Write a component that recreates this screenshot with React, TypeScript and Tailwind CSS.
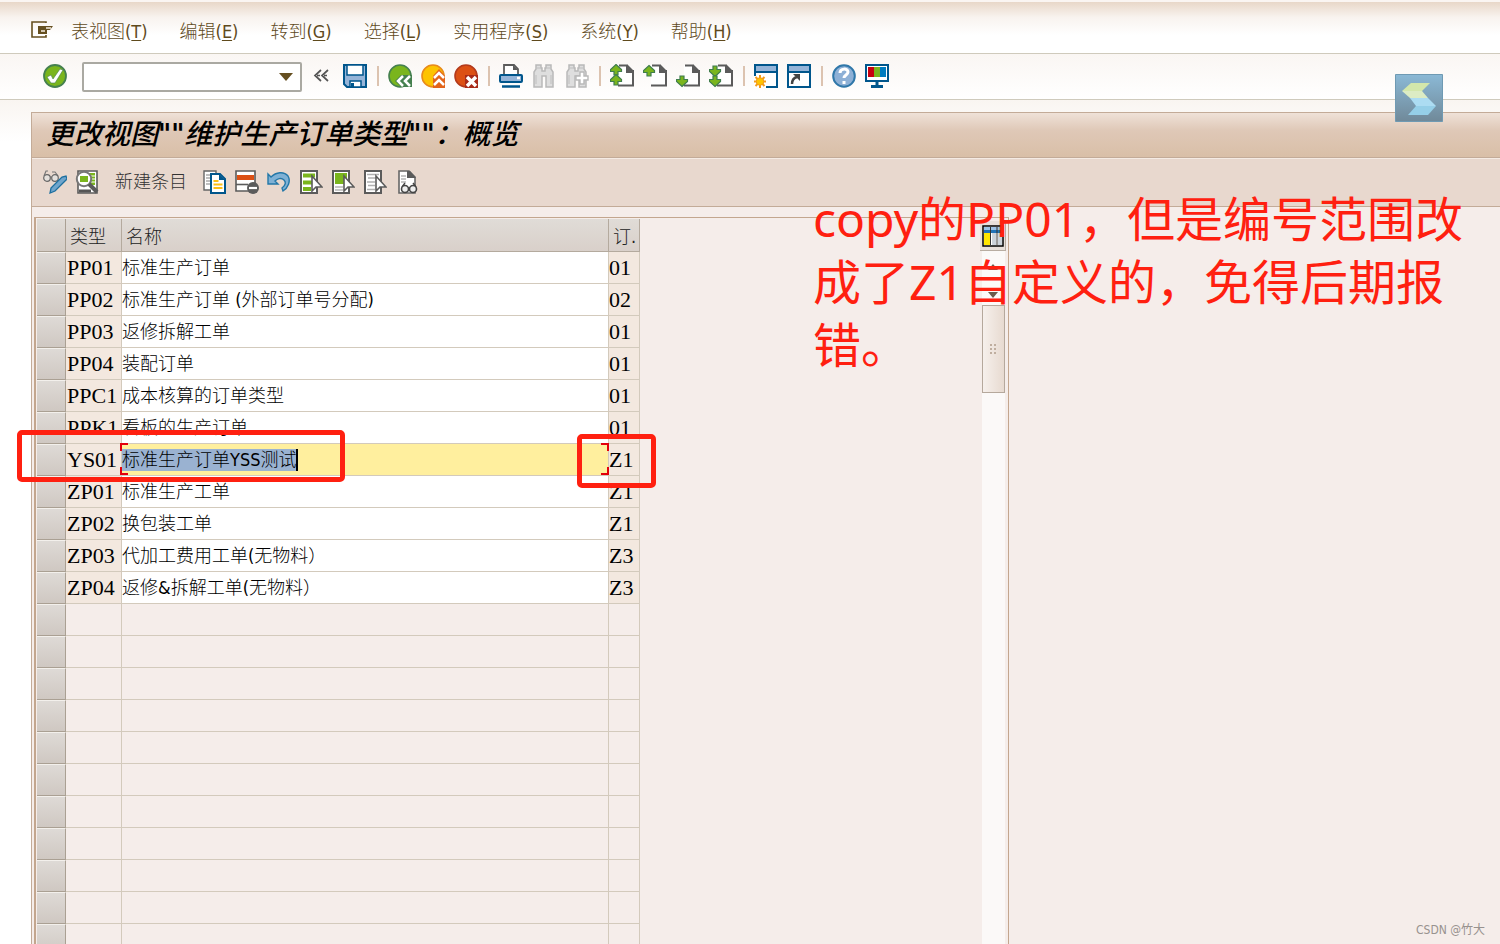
import React from 'react';

interface OrderType {
  code: string;
  name: string;
  range: string;
}

const MENUS = [
  { label: '表视图', hotkey: 'T' },
  { label: '编辑', hotkey: 'E' },
  { label: '转到', hotkey: 'G' },
  { label: '选择', hotkey: 'L' },
  { label: '实用程序', hotkey: 'S' },
  { label: '系统', hotkey: 'Y' },
  { label: '帮助', hotkey: 'H' },
];

const ORDER_TYPES: OrderType[] = [
  { code: 'PP01', name: '标准生产订单', range: '01' },
  { code: 'PP02', name: '标准生产订单 (外部订单号分配)', range: '02' },
  { code: 'PP03', name: '返修拆解工单', range: '01' },
  { code: 'PP04', name: '装配订单', range: '01' },
  { code: 'PPC1', name: '成本核算的订单类型', range: '01' },
  { code: 'PPK1', name: '看板的生产订单', range: '01' },
  { code: 'YS01', name: '标准生产订单YSS测试', range: 'Z1' },
  { code: 'ZP01', name: '标准生产工单', range: 'Z1' },
  { code: 'ZP02', name: '换包装工单', range: 'Z1' },
  { code: 'ZP03', name: '代加工费用工单(无物料）', range: 'Z3' },
  { code: 'ZP04', name: '返修&拆解工单(无物料）', range: 'Z3' },
];

const ACTIVE_CODE = 'YS01';
const EMPTY_ROWS = Array.from({ length: 11 }, (_, i) => i);

const Icon: React.FC<{ children: React.ReactNode }> = ({ children }) => (
  <svg className="w-6 h-6 block" viewBox="0 0 24 24" fill="none">{children}</svg>
);

const ToolButton: React.FC<{ label: string; disabled?: boolean; children: React.ReactNode }> = ({ label, disabled, children }) => (
  <button type="button" aria-label={label} disabled={disabled} className="w-6 h-6 shrink-0">
    <Icon>{children}</Icon>
  </button>
);

const Separator = () => (
  <div className="w-[3px] h-5 shrink-0 flex justify-center"><div className="w-0.5 bg-[#dcc3b0]" /></div>
);

/* Page outline shared by the four paging buttons */
const PageShape = () => (
  <>
    <path d="M8 1h10l5 5v16H8z" fill="#fff" />
    <path d="M9 1.5h9M23 6v15.500H8" stroke="#5b5b5b" strokeWidth="2" />
    <path d="M16 1h2l6 6v2h-8z" fill="#5b5b5b" />
  </>
);

const ArrowUp = ({ y }: { y: number }) => (
  <path transform={`translate(0 ${y})`} d="M6 0.5L11.500 5.5V7.5H8V11H4V7.5H0.500V5.5z" fill="#7ab51d" stroke="#3f7d4e" strokeWidth="1.2" />
);

const ArrowDown = ({ y }: { y: number }) => (
  <path transform={`translate(0 ${y})`} d="M6 10.5L11.500 5.5V3.5H8V0H4V3.5H0.500V5.5z" fill="#7ab51d" stroke="#3f7d4e" strokeWidth="1.2" />
);

const Binoculars = () => (
  <>
    <path d="M4 1h5v3h1v3h3V4h1V1h5v4l2 3v15h-7V12h-4v11H2V8l2-3z" fill="#dedede" stroke="#b9b9b9" strokeWidth="1.5" />
    <path d="M5 4h3M15 4h3M4 11v9M19 11v9" stroke="#c9c9c9" strokeWidth="1.5" />
  </>
);

const WindowShape = () => (
  <>
    <path d="M1 1h22v22H1z" fill="#fff" stroke="#00568c" strokeWidth="2" />
    <path d="M2 2h20v5H2z" fill="#95b4d8" />
    <path d="M1 8h22" stroke="#00568c" strokeWidth="2" />
  </>
);

const Cursor = () => (
  <path d="M13 6v15l4-4h6z" fill="#fff" stroke="#5b5b5b" strokeWidth="1.6" />
);

const MenuBar = () => (
  <nav className="h-[54px] shrink-0 border-t-2 border-t-[#faf5f2] border-b border-b-[#cfcabc] bg-linear-to-b from-[#e8d7c8] via-[#f8f3ef] via-30% to-white to-65% flex items-center pl-[30px] pt-2 text-lg leading-6 text-[#5f4a1c]">
    <button type="button" aria-label="系统菜单" className="mr-[17px] w-6 h-5 mb-1">
      <svg className="w-6 h-5" viewBox="0 0 24 20" fill="none">
        <path d="M16 3V2H2v15h14v-2" stroke="#654f20" strokeWidth="1.6" />
        <path d="M8 6h15l-3 4h-3v4H8z" fill="#654f20" />
        <path d="M16 8h5M11 11h4" stroke="#f7efe4" strokeWidth="1.5" />
      </svg>
    </button>
    <div className="flex gap-8">
      {MENUS.map((m) => (
        <button type="button" key={m.hotkey} className="whitespace-nowrap">
          {m.label}(<span className="underline underline-offset-2">{m.hotkey}</span>)
        </button>
      ))}
    </div>
  </nav>
);

const StandardToolbar = () => (
  <div className="h-[46px] shrink-0 border-b border-[#cfcabc] bg-linear-to-b from-[#faf6f3] to-white flex items-center gap-[9px] pl-[43px] pb-0.5">
    <ToolButton label="回车">
      <circle cx="12" cy="12" r="11" fill="#7ab51d" stroke="#45804f" strokeWidth="1.8" />
      <path d="M4 13l4-2 2 4 7-10 3 1-8 13h-4z" fill="#fff" stroke="#45804f" strokeWidth="0.6" />
    </ToolButton>
    <div className="relative ml-1.5 mt-0.5 w-[220px] shrink-0">
      <input type="text" aria-label="命令" className="w-full h-[30px] rounded-xs border-2 border-[#aaa9a2] bg-white pl-2 pr-8 outline-none" />
      <svg className="absolute right-2 top-2.5 w-4 h-2.5" viewBox="0 0 16 10"><path d="M1 1h14L8 9z" fill="#654f20" /></svg>
    </div>
    <button type="button" aria-label="收起" className="w-[23px] h-6 shrink-0">
      <svg className="w-[23px] h-6" viewBox="0 0 23 24" fill="none">
        <path d="M10 6l-6 5.5L10 17M17 6l-6 5.5L17 17M6 11.5h3M13 11.5h3" stroke="#555" strokeWidth="1.7" />
      </svg>
    </button>
    <ToolButton label="保存">
      <path d="M1 1h22v22H4l-3-3z" fill="#95b4d8" stroke="#00568c" strokeWidth="2" />
      <path d="M4 1h16v10H4z" fill="#fff" stroke="#00568c" strokeWidth="1.5" />
      <path d="M7 17h11v6H7z" fill="#fff" stroke="#00568c" strokeWidth="1.5" />
      <path d="M8 19h3v4H8z" fill="#00568c" />
    </ToolButton>
    <Separator />
    <ToolButton label="返回">
      <circle cx="12" cy="12" r="11" fill="#7ab51d" stroke="#45804f" strokeWidth="1.6" />
      <path d="M13 11l-6 6 6 6h11V11z" fill="#45804f" />
      <path d="M15 12l-5 5 5 5M22 12l-5 5 5 5" stroke="#fff" strokeWidth="2.5" />
    </ToolButton>
    <ToolButton label="退出">
      <circle cx="12" cy="12" r="11" fill="#fdc300" stroke="#e88a1a" strokeWidth="1.6" />
      <path d="M12 12l6-7 6 7v12H12z" fill="#e2641a" />
      <path d="M13 14l5-5 5 5M13 21l5-5 5 5" stroke="#fff" strokeWidth="2.5" />
    </ToolButton>
    <ToolButton label="取消">
      <circle cx="12" cy="12" r="11" fill="#dc5014" stroke="#b33a1c" strokeWidth="1.6" />
      <path d="M11 11h13v13H11z" fill="#a82a18" />
      <path d="M13 13l9 9M22 13l-9 9" stroke="#fff" strokeWidth="3.5" />
    </ToolButton>
    <Separator />
    <ToolButton label="打印">
      <path d="M5 10V1h10l4 4v5" fill="#fff" stroke="#5b5b5b" strokeWidth="1.8" />
      <path d="M14 1l5 5h-5z" fill="#5b5b5b" />
      <rect x="1" y="11" width="22" height="7" rx="1" fill="#95b4d8" stroke="#00568c" strokeWidth="2" />
      <path d="M18 14h3" stroke="#fff" strokeWidth="2.5" />
      <path d="M3 22.5h18" stroke="#00568c" strokeWidth="2.5" />
    </ToolButton>
    <ToolButton label="查找" disabled><Binoculars /></ToolButton>
    <ToolButton label="继续查找" disabled>
      <Binoculars />
      <path d="M15 8h4v4h4v4h-4v4h-4v-4h-4v-4h4z" fill="#fff" stroke="#b9b9b9" strokeWidth="1.4" />
    </ToolButton>
    <Separator />
    <ToolButton label="第一页"><PageShape /><ArrowUp y={0} /><ArrowUp y={10} /></ToolButton>
    <ToolButton label="上一页"><PageShape /><ArrowUp y={1} /></ToolButton>
    <ToolButton label="下一页"><PageShape /><ArrowDown y={12} /></ToolButton>
    <ToolButton label="最后一页"><PageShape /><ArrowDown y={2} /><ArrowDown y={12} /></ToolButton>
    <Separator />
    <ToolButton label="创建会话">
      <WindowShape />
      <path d="M0 12h12v12H0z" fill="#fff" />
      <path d="M6 11v13M0 17.5h12M1.5 13l9 9M10.5 13l-9 9" stroke="#f39a1a" strokeWidth="2" />
      <circle cx="6" cy="17.5" r="3.8" fill="#fdc300" stroke="#f39a1a" />
    </ToolButton>
    <ToolButton label="创建快捷方式">
      <WindowShape />
      <path d="M5 20c0-4 1-6 5-7" stroke="#444" strokeWidth="2.5" />
      <path d="M6 10h7v7z" fill="#444" />
    </ToolButton>
    <Separator />
    <ToolButton label="帮助">
      <circle cx="12" cy="12" r="10.8" fill="#8db0d6" stroke="#2f77a9" strokeWidth="2" />
      <path d="M8 9c0-5 8-5 8-1 0 3-4 3-4 6M12 17v3" stroke="#fff" strokeWidth="3" />
    </ToolButton>
    <ToolButton label="定制本地布局">
      <path d="M1 1h22v16H1z" fill="#fff" stroke="#00568c" strokeWidth="2" />
      <path d="M3 3h6v10H3z" fill="#c8000f" />
      <path d="M9 3h6v10H9z" fill="#7ab51d" />
      <path d="M15 3h6v10h-6z" fill="#007cc0" />
      <path d="M12 17v5M6 22.5h12" stroke="#00568c" strokeWidth="3" />
    </ToolButton>
  </div>
);

const ViewToolbar = () => (
  <div className="h-12 shrink-0 bg-[#e8d8ce] border-t border-t-[#f5ebe4] flex items-center gap-2 pl-[11px] pr-2 pb-px">
    <ToolButton label="显示/更改">
      <path d="M1 6l2-5h2M9 2h3l3 4M7 7h2" stroke="#777" strokeWidth="1.2" />
      <circle cx="4" cy="8" r="3.3" fill="#e4e0dc" stroke="#666" strokeWidth="1.2" />
      <circle cx="12" cy="8" r="3.3" fill="#e4e0dc" stroke="#666" strokeWidth="1.2" />
      <path d="M8 18L19 7l4-1 1 3-12 12-5 2z" fill="#6fa5cc" stroke="#1d6f9f" strokeWidth="1.3" />
    </ToolButton>
    <ToolButton label="选择集">
      <path d="M3 1h19v22H3z" fill="#fff" stroke="#5b5b5b" strokeWidth="1.6" />
      <path d="M14 3h6v12h-6z" fill="#7ab51d" />
      <path d="M14 6h6M14 9h6M14 12h6" stroke="#fff" />
      <path d="M4 21h12" stroke="#555" strokeWidth="3" />
      <circle cx="9" cy="9" r="7.2" fill="#fff" stroke="#777" strokeWidth="2" />
      <path d="M5 6h8v6H5z" fill="#7ab51d" />
      <path d="M14 14l8 8" stroke="#5b5b5b" strokeWidth="4" />
    </ToolButton>
    <button type="button" className="mx-2 text-lg leading-6 text-[#333] whitespace-nowrap">新建条目</button>
    <ToolButton label="复制为">
      <path d="M1 1h12v19H1z" fill="#fff" stroke="#666" strokeWidth="1.4" />
      <path d="M3 5h4M3 8h4M3 11h4M3 14h4" stroke="#aaa" strokeWidth="1.3" />
      <path d="M8 4h9l5 5v14H8z" fill="#fff" stroke="#00568c" strokeWidth="2" />
      <path d="M16 4l6 6h-6z" fill="#00568c" />
      <path d="M10.500 11h5M10.500 14.500h9M10.500 18h9" stroke="#fdbf14" strokeWidth="1.8" />
    </ToolButton>
    <ToolButton label="删除">
      <path d="M1 1h19v20H1z" fill="#fff" stroke="#5b5b5b" strokeWidth="1.6" />
      <path d="M2 5h17v5H2z" fill="#dc5014" />
      <path d="M1 14.500h12" stroke="#5b5b5b" strokeWidth="1.6" />
      <circle cx="18" cy="18" r="6" fill="#5b5b5b" />
      <path d="M14 18h8" stroke="#fff" strokeWidth="2.2" />
    </ToolButton>
    <ToolButton label="撤消更改">
      <path d="M1 4l3 3c5-5 13-6 17-1 3 5 0 12-5 15l-1-3c4-3 4-6 2-8-3-3-7-1-9 1l3 3H1z" fill="#7fb1d5" stroke="#2377a8" strokeWidth="1.4" />
    </ToolButton>
    <ToolButton label="全选">
      <path d="M2 1h16v22H2z" fill="#fff" stroke="#5b5b5b" strokeWidth="2" />
      <path d="M4 5.500h12M4 12.500h9M4 19h8" stroke="#7ab51d" strokeWidth="4" />
      <Cursor />
    </ToolButton>
    <ToolButton label="选择块">
      <path d="M2 1h16v22H2z" fill="#fff" stroke="#5b5b5b" strokeWidth="2" />
      <path d="M4 3h12v11H4z" fill="#7ab51d" />
      <path d="M4 17h8M4 20h8" stroke="#b5b5b5" strokeWidth="1.6" />
      <Cursor />
    </ToolButton>
    <ToolButton label="取消全选">
      <path d="M2 1h16v22H2z" fill="#fff" stroke="#5b5b5b" strokeWidth="2" />
      <path d="M4 4.500h12M5 8h10M4 12h8M5 15.500h7M4 19.500h8" stroke="#b0b0b0" strokeWidth="1.7" />
      <Cursor />
    </ToolButton>
    <ToolButton label="打印预览">
      <path d="M4 1h10l6 6v16H4z" fill="#fff" stroke="#666" strokeWidth="1.6" />
      <path d="M12 1h3l6 7h-9z" fill="#5b5b5b" />
      <path d="M6 6h5M6 9h5M6 12h5" stroke="#b5b5b5" strokeWidth="1.4" />
      <path d="M7 17l3-4M21 17l-3-4M13 18h2" stroke="#444" strokeWidth="1.4" />
      <circle cx="10" cy="19" r="3.5" fill="#eee" stroke="#444" strokeWidth="1.6" />
      <circle cx="18" cy="19" r="3.5" fill="#eee" stroke="#444" strokeWidth="1.6" />
    </ToolButton>
  </div>
);

const SelectorCell = () => (
  <td className="h-8 p-0 border-b border-r border-[#aaa093] border-t border-t-[#f3f0ec] bg-linear-to-b from-[#dedad6] to-[#cfc8c2]" />
);

/* Cell in edit mode: selected text, caret and the four corner marks */
const ActiveName = ({ name }: { name: string }) => (
  <td className="h-8 p-0 border-b border-r border-[#d3cabc] bg-[#ffef9e]">
    <div className="relative h-[31px] flex items-center">
      <span className="h-[22px] leading-[22px] bg-[#9ab2d1] border-r-2 border-black whitespace-nowrap">{name}</span>
      <i className="absolute -left-0.5 -top-px w-2 h-2 border-t-2 border-l-2 border-[#e3000b]" />
      <i className="absolute -left-0.5 bottom-0 w-2 h-2 border-b-2 border-l-2 border-[#e3000b]" />
      <i className="absolute -right-px -top-px w-2 h-2 border-t-2 border-r-2 border-[#e3000b]" />
      <i className="absolute -right-px bottom-0 w-2 h-2 border-b-2 border-r-2 border-[#e3000b]" />
    </div>
  </td>
);

const OrderTable = () => (
  <table className="w-[603px] shrink-0 table-fixed border-separate border-spacing-0 self-start text-lg leading-6 text-black">
    <colgroup>
      <col className="w-[29px]" />
      <col className="w-14" />
      <col />
      <col className="w-[31px]" />
    </colgroup>
    <thead>
      <tr className="text-left text-[#222]">
        <th aria-label="选择" className="h-[33px] p-0 border-b border-r border-[#aaa093] bg-linear-to-b from-[#e0dcd7] to-[#d3cbc4]" />
        <th className="p-0 pl-1 pt-1 font-light border-b border-r border-[#b4aa9e] bg-linear-to-b from-[#e0dcd7] to-[#d9d0ca]">类型</th>
        <th className="p-0 pl-1 pt-1 font-light border-b border-r border-[#b4aa9e] bg-linear-to-b from-[#e0dcd7] to-[#d9d0ca]">名称</th>
        <th className="p-0 pl-1 pt-1 font-light border-b border-r border-[#b4aa9e] bg-linear-to-b from-[#e0dcd7] to-[#d9d0ca] whitespace-nowrap">订.</th>
      </tr>
    </thead>
    <tbody>
      {ORDER_TYPES.map((row) => (
        <tr key={row.code}>
          <SelectorCell />
          <td className="h-8 p-0 pl-px border-b border-r border-[#d3cabc] bg-[#f3e8df] font-['Liberation_Serif',serif] text-[22px]">{row.code}</td>
          {row.code === ACTIVE_CODE ? (
            <ActiveName name={row.name} />
          ) : (
            <td className="h-8 p-0 border-b border-r border-[#d3cabc] bg-white">{row.name}</td>
          )}
          <td className="h-8 p-0 border-b border-r border-[#d3cabc] bg-[#f3e8df] font-['Liberation_Serif',serif] text-[22px]">{row.range}</td>
        </tr>
      ))}
      {EMPTY_ROWS.map((i) => (
        <tr key={i}>
          <SelectorCell />
          <td className="h-8 p-0 border-b border-r border-[#d3cabc]" />
          <td className="h-8 p-0 border-b border-r border-[#d3cabc]" />
          <td className="h-8 p-0 border-b border-r border-[#d3cabc]" />
        </tr>
      ))}
    </tbody>
  </table>
);

const ScrollColumn = () => (
  <div className="w-[26px] shrink-0 flex flex-col items-center mr-0.5">
    <button type="button" aria-label="表设置" className="mt-0.5 w-[26px] h-[30px] shrink-0 bg-[#e8e0da] border-b border-r border-[#b8ada2] flex items-center justify-center">
      <svg className="w-[22px] h-[22px]" viewBox="0 0 22 22" fill="none">
        <path d="M1 1h20v20H1z" fill="#fff" stroke="#000" strokeWidth="1.5" />
        <path d="M2 2h18v3H2z" fill="#9dc3e6" />
        <path d="M2 5h18v3H2z" fill="#2173b8" />
        <path d="M2 8h6v12H2z" fill="#ffe600" />
        <path d="M10 8h4v12h-4zM16 8h4v12h-4z" fill="#ccd3da" />
        <path d="M8.500 2v18M15 2v18" stroke="#333" />
      </svg>
    </button>
    <div className="w-[23px] flex-1 flex flex-col items-center bg-[#fbf9f8]">
      <button type="button" aria-label="向上滚动" className="mt-2 h-4"><svg className="w-3 h-2" viewBox="0 0 12 8"><path d="M6 1l5 6H1z" fill="#6b5a4c" /></svg></button>
      <button type="button" aria-label="向下滚动" className="mt-3 h-4"><svg className="w-3 h-2" viewBox="0 0 12 8"><path d="M6 7l5-6H1z" fill="#6b5a4c" /></svg></button>
      <div className="mt-0.5 w-full h-[88px] border border-[#b5a89c] bg-linear-to-r from-[#f6f0ec] to-[#e7dad0] flex items-center justify-center">
        <div className="grid grid-cols-2 gap-0.5">
          {[0, 1, 2, 3, 4, 5].map((i) => <div key={i} className="w-0.5 h-0.5 bg-[#bfae9f]" />)}
        </div>
      </div>
    </div>
  </div>
);

/* Red remarks drawn over the window */
const Annotations = () => (
  <>
    <div className="absolute left-[17px] top-[430px] w-[328px] h-[52px] border-5 border-[#ff2010] rounded-[5px]" />
    <div className="absolute left-[577px] top-[434px] w-[79px] h-[54px] border-5 border-[#ff2010] rounded-[5px]" />
    <p className="absolute left-[813px] top-[187px] text-5xl leading-[63px] font-normal text-[#ff2010] whitespace-nowrap font-['Noto_Sans','Noto_Sans_CJK_SC',sans-serif]">
      copy的PP01，但是编号范围改<br />成了Z1自定义的，免得后期报<br />错。
    </p>
    <svg className="absolute right-[57px] top-[74px] w-12 h-12" viewBox="0 0 48 48">
      <defs>
        <linearGradient id="badge" x1="0" y1="0" x2="0" y2="1">
          <stop offset="0" stopColor="#8bb9d6" />
          <stop offset="1" stopColor="#708999" />
        </linearGradient>
      </defs>
      <path d="M0.500 0.500h47v47h-47z" fill="url(#badge)" stroke="#6f9ab3" />
      <path d="M16 9h19l-8 8H7z" fill="#d3e7ab" />
      <path d="M7 17h20l6 7H15z" fill="#dcecc4" />
      <path d="M15 24h18l8 8H21z" fill="#acdcf2" />
      <path d="M21 32h20l-8 9H13z" fill="#95cfe8" />
    </svg>
    <span className="absolute right-[15px] bottom-1.5 text-xs leading-4 font-normal text-[#98928f]">CSDN @竹大</span>
  </>
);

export default function App() {
  return (
    <div className="relative h-screen overflow-hidden flex flex-col bg-white font-light font-['DejaVu_Sans_Condensed','Noto_Sans_CJK_SC',sans-serif]">
      <MenuBar />
      <StandardToolbar />
      <div className="flex-1 min-h-0 pt-3 pl-[31px] flex flex-col bg-linear-to-b from-[#f9f5f1] to-white to-5%">
        <main className="flex-1 min-h-0 flex flex-col border-t border-l border-[#c3ab98] bg-[#f5edea]">
          <header className="h-[45px] shrink-0 flex items-center pl-3.5 border-b border-[#c3ab98] bg-linear-to-b from-[#efe2d8] via-[#dfc8b7] via-40% to-[#d9bfa7]">
            <h1 className="text-[28px] leading-9 font-medium italic text-black whitespace-nowrap">
              更改视图<span className="font-bold">""</span>维护生产订单类型<span className="font-bold">""</span>：概览
            </h1>
          </header>
          <ViewToolbar />
          <section className="flex-1 min-h-0 flex flex-col border-t border-[#c3ab98] pt-2.5 pl-0.5">
            <div className="flex-1 min-h-0 w-[975px] overflow-hidden flex justify-between border-t border-l-2 border-r border-[#c3a68e] pl-px pt-px">
              <OrderTable />
              <ScrollColumn />
            </div>
          </section>
        </main>
      </div>
      <Annotations />
    </div>
  );
}
